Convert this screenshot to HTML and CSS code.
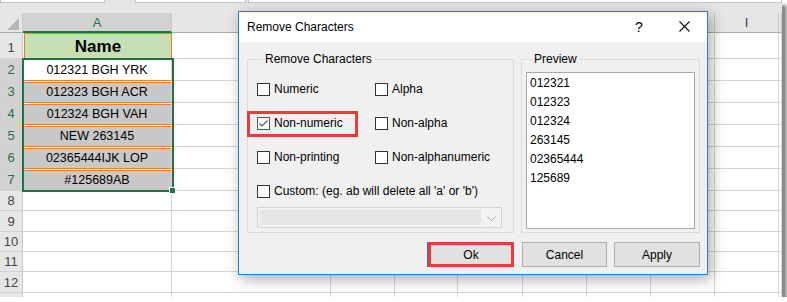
FILE: index.html
```html
<!DOCTYPE html>
<html>
<head>
<meta charset="utf-8">
<title>Remove Characters</title>
<link rel="stylesheet" href="styles.css">
</head>
<body>
<div class="screen">
  <div class="topbar">
    <div class="box box-name"></div>
    <div class="box box-fx"></div>
    <div class="box box-formula"></div>
  </div>

  <div class="sheet">
    <div class="row r-hdr">
      <div class="corner"><svg class="tri" width="12" height="12" viewBox="0 0 12 12"><polygon points="12,0 12,12 0,12" fill="#b5b5b5"/></svg></div>
      <div class="colh colh-sel">A</div>
      <div class="colh"></div><div class="colh"></div><div class="colh"></div><div class="colh"></div><div class="colh"></div><div class="colh"></div><div class="colh"></div>
      <div class="colh colh-i">I</div>
      <div class="colh"></div>
    </div>

    <div class="row r1">
      <div class="rh rh-1">1</div>
      <div class="a name">Name</div>
      <div class="c"></div><div class="c"></div><div class="c"></div><div class="c"></div><div class="c"></div><div class="c"></div><div class="c"></div><div class="c"></div><div class="c"></div>
    </div>

    <div class="row r22">
      <div class="rh rh-sel">2</div>
      <div class="a active">012321 BGH YRK</div>
      <div class="c"></div><div class="c"></div><div class="c"></div><div class="c"></div><div class="c"></div><div class="c"></div><div class="c"></div><div class="c"></div><div class="c"></div>
    </div>
    <div class="row r22">
      <div class="rh rh-sel">3</div>
      <div class="a sel">012323 BGH ACR</div>
      <div class="c"></div><div class="c"></div><div class="c"></div><div class="c"></div><div class="c"></div><div class="c"></div><div class="c"></div><div class="c"></div><div class="c"></div>
    </div>
    <div class="row r22">
      <div class="rh rh-sel">4</div>
      <div class="a sel">012324 BGH VAH</div>
      <div class="c"></div><div class="c"></div><div class="c"></div><div class="c"></div><div class="c"></div><div class="c"></div><div class="c"></div><div class="c"></div><div class="c"></div>
    </div>
    <div class="row r22">
      <div class="rh rh-sel">5</div>
      <div class="a sel">NEW 263145</div>
      <div class="c"></div><div class="c"></div><div class="c"></div><div class="c"></div><div class="c"></div><div class="c"></div><div class="c"></div><div class="c"></div><div class="c"></div>
    </div>
    <div class="row r22">
      <div class="rh rh-sel">6</div>
      <div class="a sel">02365444IJK LOP</div>
      <div class="c"></div><div class="c"></div><div class="c"></div><div class="c"></div><div class="c"></div><div class="c"></div><div class="c"></div><div class="c"></div><div class="c"></div>
    </div>
    <div class="row r22">
      <div class="rh rh-sel">7</div>
      <div class="a sel last">#125689AB</div>
      <div class="c"></div><div class="c"></div><div class="c"></div><div class="c"></div><div class="c"></div><div class="c"></div><div class="c"></div><div class="c"></div><div class="c"></div>
    </div>

    <div class="row r20">
      <div class="rh">8</div>
      <div class="c"></div><div class="c"></div><div class="c"></div><div class="c"></div><div class="c"></div><div class="c"></div><div class="c"></div><div class="c"></div><div class="c"></div><div class="c"></div>
    </div>
    <div class="row r21">
      <div class="rh">9</div>
      <div class="c"></div><div class="c"></div><div class="c"></div><div class="c"></div><div class="c"></div><div class="c"></div><div class="c"></div><div class="c"></div><div class="c"></div><div class="c"></div>
    </div>
    <div class="row r20">
      <div class="rh">10</div>
      <div class="c"></div><div class="c"></div><div class="c"></div><div class="c"></div><div class="c"></div><div class="c"></div><div class="c"></div><div class="c"></div><div class="c"></div><div class="c"></div>
    </div>
    <div class="row r20">
      <div class="rh">11</div>
      <div class="c"></div><div class="c"></div><div class="c"></div><div class="c"></div><div class="c"></div><div class="c"></div><div class="c"></div><div class="c"></div><div class="c"></div><div class="c"></div>
    </div>
    <div class="row r21">
      <div class="rh">12</div>
      <div class="c"></div><div class="c"></div><div class="c"></div><div class="c"></div><div class="c"></div><div class="c"></div><div class="c"></div><div class="c"></div><div class="c"></div><div class="c"></div>
    </div>
    <div class="row r20">
      <div class="rh"></div>
      <div class="c"></div><div class="c"></div><div class="c"></div><div class="c"></div><div class="c"></div><div class="c"></div><div class="c"></div><div class="c"></div><div class="c"></div><div class="c"></div>
    </div>
  </div>

  <div class="selection"><div class="handle"></div></div>

  <div class="dialog">
    <div class="titlebar">
      <span class="title">Remove Characters</span>
      <span class="help">?</span>
      <span class="close"><svg width="11" height="11" viewBox="0 0 11 11"><path d="M0.5 0.5 L10.5 10.5 M10.5 0.5 L0.5 10.5" stroke="#111" stroke-width="1.1" fill="none"/></svg></span>
    </div>
    <div class="dbody">
      <div class="groups">
        <fieldset class="group g-remove">
          <legend>Remove Characters</legend>
          <div class="opts">
            <div class="opt"><span class="chk"></span><span>Numeric</span></div>
            <div class="opt"><span class="chk"></span><span>Alpha</span></div>
            <div class="opt marked"><span class="chk checked"><svg width="11" height="11" viewBox="0 0 11 11"><polyline points="1.5,5.5 4,8 9.5,2.5" fill="none" stroke="#5a5a5a" stroke-width="1.2"/></svg></span><span>Non-numeric</span><span class="hl"></span></div>
            <div class="opt"><span class="chk"></span><span>Non-alpha</span></div>
            <div class="opt"><span class="chk"></span><span>Non-printing</span></div>
            <div class="opt"><span class="chk"></span><span>Non-alphanumeric</span></div>
          </div>
          <div class="opt custom"><span class="chk"></span><span>Custom: (eg. ab will delete all 'a' or 'b')</span></div>
          <div class="combo">
            <div class="combo-field"></div>
            <div class="combo-arrow"><svg width="9" height="5" viewBox="0 0 9 5"><polyline points="0.5,0.5 4.5,4.5 8.5,0.5" fill="none" stroke="#a9a9a9" stroke-width="1"/></svg></div>
          </div>
        </fieldset>
        <fieldset class="group g-preview">
          <legend>Preview</legend>
          <div class="listbox">
            <div class="item">012321</div>
            <div class="item">012323</div>
            <div class="item">012324</div>
            <div class="item">263145</div>
            <div class="item">02365444</div>
            <div class="item">125689</div>
          </div>
        </fieldset>
      </div>
      <div class="buttons">
        <button class="btn btn-ok">Ok</button>
        <button class="btn btn-cancel">Cancel</button>
        <button class="btn btn-apply">Apply</button>
      </div>
    </div>
  </div>
</div>
</body>
</html>
```

FILE: styles.css
```css
* { box-sizing: border-box; }

body {
  margin: 0;
  background: #ffffff;
}

.screen {
  position: relative;
  width: 782px;
  height: 297px;
  overflow: hidden;
  background: #ffffff;
  font-family: "Liberation Sans", Arial, sans-serif;
  box-shadow: 5px 5px 3px #8b8b8b;
}

/* formula bar strip */
.topbar {
  height: 13px;
  background: #e6e6e6;
  display: flex;
  align-items: flex-start;
}
.box {
  height: 3px;
  background: #ffffff;
  border: 1px solid #c6c6c6;
  border-top: none;
}
.box-name { width: 105px; }
.box-fx { width: 111px; margin-left: 30px; }
.box-formula { flex: 1; margin-left: 2px; }

/* grid */
.row {
  display: grid;
  grid-template-columns: 23px 149px 159px 64px 63px 65px 64px 64px 64px 64px 1fr;
}
.r-hdr { height: 20px; }
.r1 { height: 26px; }
.r22 { height: 22px; }
.r20 { height: 20px; }
.r21 { height: 21px; }

.corner {
  position: relative;
  background: #e6e6e6;
  border-right: 1px solid #c8c8c8;
  border-bottom: 1px solid #ababab;
}
.tri { position: absolute; right: 3px; bottom: 2px; display: block; }

.colh {
  background: #e6e6e6;
  border-right: 1px solid #c6c6c6;
  border-bottom: 1px solid #ababab;
  font-size: 13px;
  color: #444;
  display: flex;
  align-items: center;
  justify-content: center;
}
.colh-sel {
  background: #d2d2d2;
  color: #217346;
  border-bottom: 2px solid #217346;
}
.colh-i { color: #5c2a6e; }

.rh {
  background: #e6e6e6;
  border-right: 1px solid #c8c8c8;
  border-bottom: 1px solid #d0d0d0;
  color: #444;
  font-size: 13px;
  display: flex;
  align-items: center;
  justify-content: center;
}
.rh-1 { padding-top: 3px; }
.rh-sel {
  background: #d2d2d2;
  color: #217346;
}

.c {
  border-right: 1px solid #d4d4d4;
  border-bottom: 1px solid #d4d4d4;
}

.a {
  display: flex;
  align-items: center;
  justify-content: center;
  font-size: 12.5px;
  color: #000;
  border-right: 1px solid #d4d4d4;
  border-bottom: 1px solid #d4d4d4;
  white-space: nowrap;
}
.name {
  margin-left: 1px;
  background: #c6e0b4;
  border: 1px solid #ed7d31;
  font-weight: bold;
  font-size: 17px;
  padding-top: 1px;
}
.active {
  background: #ffffff;
  border-bottom-color: #ed7d31;
}
.sel {
  background: #c8c8c8;
  border-top: 1px solid #ffffff;
  border-bottom-color: #ed7d31;
  box-shadow: inset 0 1px 0 #ed7d31;
}
.sel.last { border-bottom-color: #d4d4d4; }

.selection {
  position: absolute;
  left: 22px;
  top: 58px;
  width: 152px;
  height: 134px;
  border: 2px solid #217346;
}
.handle {
  position: absolute;
  right: -4px;
  bottom: -4px;
  width: 7px;
  height: 7px;
  background: #217346;
  border: 1px solid #ffffff;
}

/* dialog */
.dialog {
  position: absolute;
  left: 238px;
  top: 11px;
  width: 470px;
  height: 264px;
  border: 1px solid #2b7cd3;
  background: #f0f0f0;
  box-shadow: 3px 4px 14px rgba(0, 0, 0, 0.35);
  display: flex;
  flex-direction: column;
  font-size: 12px;
  color: #000;
}
.titlebar {
  height: 30px;
  flex: none;
  background: #ffffff;
  display: flex;
  align-items: center;
  padding: 0 17px 1px 8px;
}
.help {
  margin-left: auto;
  width: 10px;
  text-align: center;
  font-size: 14px;
}
.close {
  margin-left: 35px;
  width: 11px;
  height: 11px;
  display: flex;
}
.dbody {
  flex: 1;
  display: flex;
  flex-direction: column;
  gap: 9px;
  padding: 10px 7px 6px 8px;
}
.groups {
  height: 181px;
  display: flex;
  gap: 7px;
}
.group {
  margin: 0;
  border: 1px solid #dcdcdc;
  min-width: 0;
  height: 181px;
}
.group legend {
  padding: 0 2px;
  margin-left: 6px;
  line-height: 15px;
  font-size: 12px;
}
.g-remove {
  width: 267px;
  padding: 12px 0 0 9px;
}
.g-preview {
  width: 179px;
  padding: 5px 0 0 4px;
}

.opts {
  display: grid;
  grid-template-columns: 118px 1fr;
  grid-auto-rows: 20px;
  row-gap: 14px;
}
.opt {
  position: relative;
  display: flex;
  align-items: center;
  gap: 4px;
  height: 20px;
  white-space: nowrap;
}
.custom { margin-top: 14px; }
.chk {
  flex: none;
  width: 13px;
  height: 13px;
  border: 1px solid #333333;
  background: #ffffff;
  display: flex;
  align-items: center;
  justify-content: center;
}
.chk.checked { border-color: #5a5a5a; }
.hl {
  position: absolute;
  left: -10px;
  top: -2px;
  width: 111px;
  height: 26px;
  border: 3px solid #ef3a3d;
}

.combo {
  margin-top: 6px;
  width: 245px;
  height: 21px;
  border: 1px solid #d3d3d3;
  background: #f2f2f2;
  display: flex;
  align-items: stretch;
  padding: 2px 0 2px 2px;
}
.combo-field {
  width: 221px;
  background: #e6e6e6;
}
.combo-arrow {
  flex: 1;
  display: flex;
  align-items: center;
  justify-content: center;
  padding-top: 1px;
}

.listbox {
  width: 169px;
  height: 157px;
  background: #ffffff;
  border: 1px solid #a9a9a9;
  padding: 1px 3px;
}
.item {
  height: 19px;
  line-height: 19px;
  font-size: 12px;
}

.buttons {
  height: 25px;
  flex: none;
  display: flex;
  justify-content: flex-end;
}
.btn {
  height: 25px;
  margin: 0;
  background: #e1e1e1;
  border: 1px solid #adadad;
  font-family: "Liberation Sans", Arial, sans-serif;
  font-size: 12px;
  color: #000;
  padding: 0;
}
.btn-ok {
  width: 86px;
  border: 3px solid #ef3a3d;
  box-shadow: -1px 0 0 #2d6ec6;
}
.btn-cancel {
  width: 85px;
  margin-left: 8px;
}
.btn-apply {
  width: 86px;
  margin-left: 7px;
}
```
